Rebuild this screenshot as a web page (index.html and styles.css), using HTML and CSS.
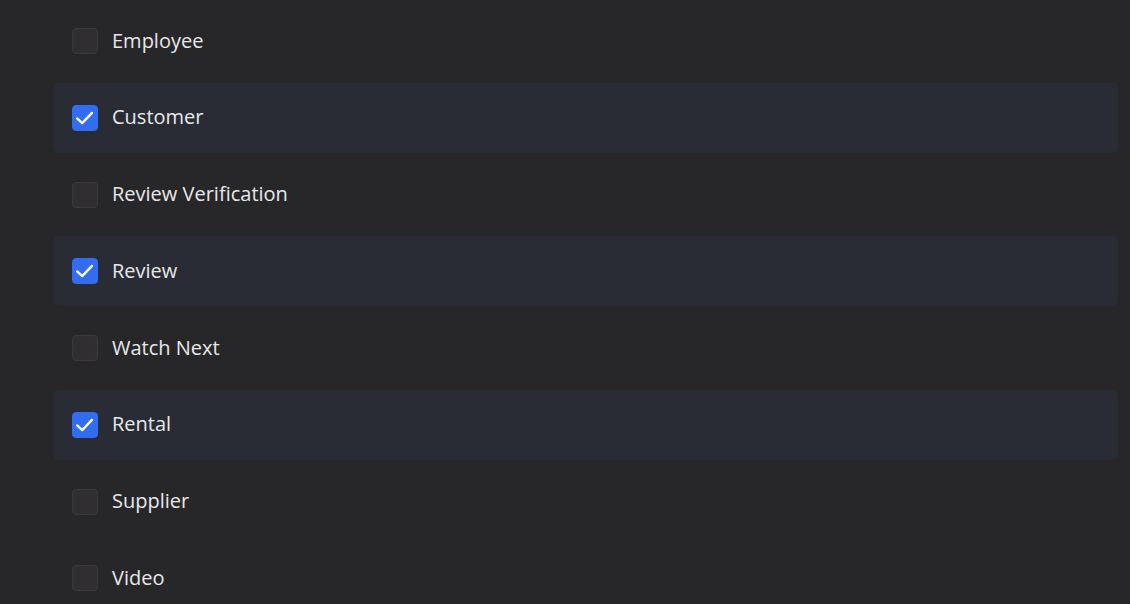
FILE: index.html
```html
<!DOCTYPE html>
<html lang="en">
  <head>
    <meta charset="UTF-8" />
    <meta name="viewport" content="width=device-width, initial-scale=1.0" />
    <title>Entities</title>
    <link rel="stylesheet" href="styles.css">
  </head>
  <body>
    <ul class="entity-list">
      <li class="entity">
        <span class="check"></span>
        <span class="label">Employee</span>
      </li>
      <li class="entity selected">
        <span class="check on">
          <svg viewBox="0 0 26 26"><path d="M4.5 13.5 L10 18.5 L20.5 7.5" /></svg>
        </span>
        <span class="label">Customer</span>
      </li>
      <li class="entity">
        <span class="check"></span>
        <span class="label">Review Verification</span>
      </li>
      <li class="entity selected">
        <span class="check on">
          <svg viewBox="0 0 26 26"><path d="M4.5 13.5 L10 18.5 L20.5 7.5" /></svg>
        </span>
        <span class="label">Review</span>
      </li>
      <li class="entity">
        <span class="check"></span>
        <span class="label">Watch Next</span>
      </li>
      <li class="entity selected">
        <span class="check on">
          <svg viewBox="0 0 26 26"><path d="M4.5 13.5 L10 18.5 L20.5 7.5" /></svg>
        </span>
        <span class="label">Rental</span>
      </li>
      <li class="entity">
        <span class="check"></span>
        <span class="label">Supplier</span>
      </li>
      <li class="entity">
        <span class="check"></span>
        <span class="label">Video</span>
      </li>
    </ul>
  </body>
</html>
```

FILE: styles.css
```css
* {
  margin: 0;
  padding: 0;
  box-sizing: border-box;
}

body {
  background-color: #272729;
  font-family: "Open Sans", "Noto Sans", Arial, sans-serif;
  color: #e8e8ea;
  overflow: hidden;
}

/* List of entity rows */
.entity-list {
  list-style: none;
  display: flex;
  flex-direction: column;
  gap: 6.75px;
  padding: 6px 12px 0 53px;
}

.entity {
  height: 70px;
  display: flex;
  align-items: center;
  gap: 14px;
  padding-left: 19px;
  border-radius: 5px;
}

.entity.selected {
  background-color: #292c35;
}

/* Checkbox */
.check {
  width: 26px;
  height: 26px;
  border-radius: 4px;
  background-color: #302e31;
  border: 1px solid #39383b;
  flex-shrink: 0;
  display: flex;
}

.check.on {
  background-color: #326cf0;
  border-color: #326cf0;
}

.check svg {
  width: 24px;
  height: 24px;
  fill: none;
  stroke: #fff;
  stroke-width: 2.6;
  stroke-linecap: round;
  stroke-linejoin: round;
}

.label {
  font-size: 20px;
  line-height: 26px;
  padding-bottom: 1px;
}
```
